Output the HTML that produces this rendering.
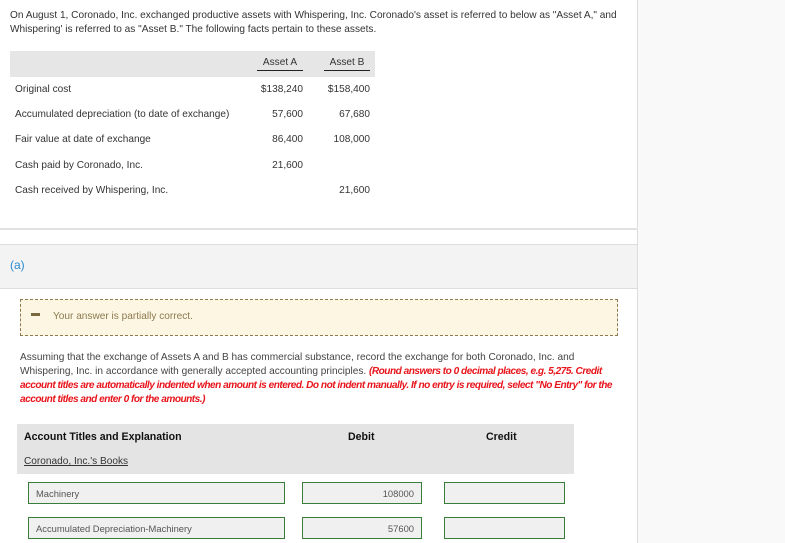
<!DOCTYPE html>
<html><head><meta charset="utf-8"><style>
*{margin:0;padding:0;box-sizing:border-box}
body{width:785px;height:543px;overflow:hidden;background:#f9f9f9;font-family:"Liberation Sans",sans-serif;color:#333;position:relative}
.a{position:absolute;white-space:nowrap}
.s{font-size:10.1px;letter-spacing:0}
.r{text-align:right}
.in{position:absolute;height:22px;border:1px solid #3a7d3a;background:#f0f0f0;font-size:9.4px;color:#555;padding:5px 7px}
b.red{color:#e8141b;font-style:italic;letter-spacing:-0.5px}
</style></head><body>
<div class="a" style="left:0;top:0;width:638px;height:543px;background:#fff;border-right:1px solid #ddd"></div>
<div class="a" style="left:0;top:228px;width:638px;height:2px;background:#e2e2e2"></div>
<div class="a s" style="left:10px;top:9px;line-height:14px;color:#333">On August 1, Coronado, Inc. exchanged productive assets with Whispering, Inc. Coronado's asset is referred to below as "Asset A," and<br>Whispering' is referred to as "Asset B." The following facts pertain to these assets.</div>
<div class="a" style="left:10px;top:51px;width:365px;height:26px;background:#e6e6e6"></div>
<div class="a s" style="left:257px;top:57px;width:46px;text-align:center;border-bottom:1px solid #222;padding-bottom:2px">Asset A</div>
<div class="a s" style="left:324px;top:57px;width:46px;text-align:center;border-bottom:1px solid #222;padding-bottom:2px">Asset B</div>
<div class="a s" style="left:15px;top:84px">Original cost</div>
<div class="a s" style="left:15px;top:109px">Accumulated depreciation (to date of exchange)</div>
<div class="a s" style="left:15px;top:134px">Fair value at date of exchange</div>
<div class="a s" style="left:15px;top:160px">Cash paid by Coronado, Inc.</div>
<div class="a s" style="left:15px;top:185px">Cash received by Whispering, Inc.</div>
<div class="a s r" style="left:243px;width:60px;top:84px">$138,240</div>
<div class="a s r" style="left:243px;width:60px;top:109px">57,600</div>
<div class="a s r" style="left:243px;width:60px;top:134px">86,400</div>
<div class="a s r" style="left:243px;width:60px;top:160px">21,600</div>
<div class="a s r" style="left:310px;width:60px;top:84px">$158,400</div>
<div class="a s r" style="left:310px;width:60px;top:109px">67,680</div>
<div class="a s r" style="left:310px;width:60px;top:134px">108,000</div>
<div class="a s r" style="left:310px;width:60px;top:185px">21,600</div>
<div class="a" style="left:0;top:244px;width:638px;height:45px;background:#f3f3f3;border-top:1px solid #ddd;border-bottom:1px solid #ddd;border-right:1px solid #ddd"></div>
<div class="a" style="left:10px;top:258px;font-size:12px;color:#2a8ad0">(a)</div>
<div class="a" style="left:20px;top:299px;width:598px;height:37px;background:#fdf6e3;border:1px dashed #8c7a50"></div>
<div class="a" style="left:31px;top:313px;width:9px;height:3px;background:#7a6a40"></div>
<div class="a s" style="left:53px;top:311px;color:#8c7a50">Your answer is partially correct.</div>
<div class="a s" style="left:20px;top:351px;line-height:14px;color:#444">Assuming that the exchange of Assets A and B has commercial substance, record the exchange for both Coronado, Inc. and<br>Whispering, Inc. in accordance with generally accepted accounting principles. <b class="red">(Round answers to 0 decimal places, e.g. 5,275. Credit</b><br><b class="red">account titles are automatically indented when amount is entered. Do not indent manually. If no entry is required, select "No Entry" for the</b><br><b class="red">account titles and enter 0 for the amounts.)</b></div>
<div class="a" style="left:17px;top:424px;width:557px;height:50px;background:#e4e4e4"></div>
<div class="a" style="left:24px;top:431px;font-size:10.6px;font-weight:bold;color:#111">Account Titles and Explanation</div>
<div class="a" style="left:348px;top:431px;font-size:10.6px;font-weight:bold;color:#111">Debit</div>
<div class="a" style="left:486px;top:431px;font-size:10.6px;font-weight:bold;color:#111">Credit</div>
<div class="a s" style="left:24px;top:456px;text-decoration:underline;color:#333">Coronado, Inc.'s Books</div>
<div class="in" style="left:28px;top:482px;width:257px">Machinery</div>
<div class="in" style="left:302px;top:482px;width:120px;text-align:right">108000</div>
<div class="in" style="left:444px;top:482px;width:121px"></div>
<div class="in" style="left:28px;top:517px;width:257px">Accumulated Depreciation-Machinery</div>
<div class="in" style="left:302px;top:517px;width:120px;text-align:right">57600</div>
<div class="in" style="left:444px;top:517px;width:121px"></div>
</body></html>
